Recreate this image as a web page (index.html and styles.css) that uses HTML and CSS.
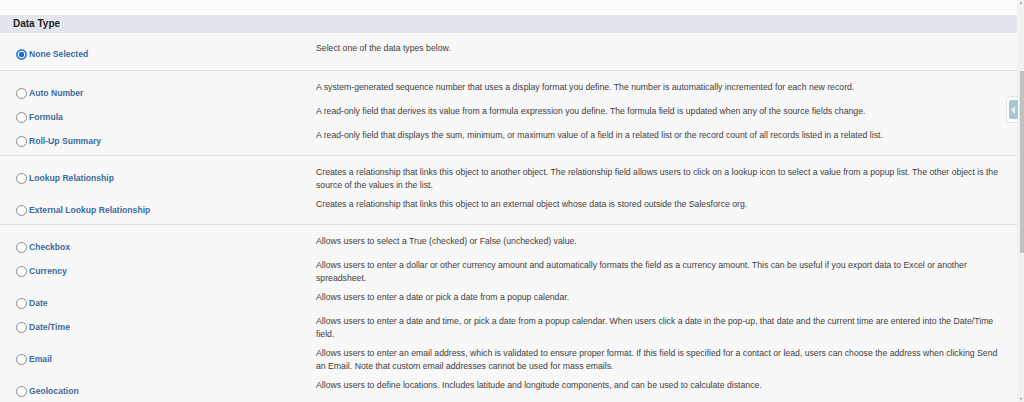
FILE: index.html
```html
<!DOCTYPE html>
<html>
<head>
<meta charset="utf-8">
<link rel="stylesheet" href="styles.css">
</head>
<body>
<div class="page">
  <div class="main">
    <div class="topgap"></div>
    <div class="hdr">Data Type</div>

    <div class="section first">
      <div class="row"><div class="opt"><span class="radio on"></span><span class="lbl">None Selected</span></div><div class="desc">Select one of the data types below.</div></div>
    </div>

    <div class="section">
      <div class="row"><div class="opt"><span class="radio"></span><span class="lbl">Auto Number</span></div><div class="desc">A system-generated sequence number that uses a display format you define. The number is automatically incremented for each new record.</div></div>
      <div class="row"><div class="opt"><span class="radio"></span><span class="lbl">Formula</span></div><div class="desc">A read-only field that derives its value from a formula expression you define. The formula field is updated when any of the source fields change.</div></div>
      <div class="row"><div class="opt"><span class="radio"></span><span class="lbl">Roll-Up Summary</span></div><div class="desc">A read-only field that displays the sum, minimum, or maximum value of a field in a related list or the record count of all records listed in a related list.</div></div>
    </div>

    <div class="section">
      <div class="row"><div class="opt"><span class="radio"></span><span class="lbl">Lookup Relationship</span></div><div class="desc">Creates a relationship that links this object to another object. The relationship field allows users to click on a lookup icon to select a value from a popup list. The other object is the<br>source of the values in the list.</div></div>
      <div class="row"><div class="opt"><span class="radio"></span><span class="lbl">External Lookup Relationship</span></div><div class="desc">Creates a relationship that links this object to an external object whose data is stored outside the Salesforce org.</div></div>
    </div>

    <div class="section">
      <div class="row"><div class="opt"><span class="radio"></span><span class="lbl">Checkbox</span></div><div class="desc">Allows users to select a True (checked) or False (unchecked) value.</div></div>
      <div class="row"><div class="opt"><span class="radio"></span><span class="lbl">Currency</span></div><div class="desc">Allows users to enter a dollar or other currency amount and automatically formats the field as a currency amount. This can be useful if you export data to Excel or another<br>spreadsheet.</div></div>
      <div class="row"><div class="opt"><span class="radio"></span><span class="lbl">Date</span></div><div class="desc">Allows users to enter a date or pick a date from a popup calendar.</div></div>
      <div class="row"><div class="opt"><span class="radio"></span><span class="lbl">Date/Time</span></div><div class="desc">Allows users to enter a date and time, or pick a date from a popup calendar. When users click a date in the pop-up, that date and the current time are entered into the Date/Time<br>field.</div></div>
      <div class="row"><div class="opt"><span class="radio"></span><span class="lbl">Email</span></div><div class="desc">Allows users to enter an email address, which is validated to ensure proper format. If this field is specified for a contact or lead, users can choose the address when clicking Send<br>an Email. Note that custom email addresses cannot be used for mass emails.</div></div>
      <div class="row"><div class="opt"><span class="radio"></span><span class="lbl">Geolocation</span></div><div class="desc">Allows users to define locations. Includes latitude and longitude components, and can be used to calculate distance.</div></div>
    </div>
  </div>

  <div class="scroll">
    <div class="arrow up"></div>
    <div class="track"><div class="thumb"></div></div>
    <div class="arrow down"></div>
  </div>

  <div class="sidetab"><div class="tabinner"><span class="tri"></span></div></div>
</div>
</body>
</html>
```

FILE: styles.css
```css
html, body {
  margin: 0;
  padding: 0;
  background: #f8f8f8;
  font-family: "Liberation Sans", Arial, sans-serif;
}

.page {
  position: relative;
  display: flex;
  width: 1024px;
  height: 402px;
  overflow: hidden;
}

.main {
  width: 1017px;
  flex: none;
  background: #f8f8f8;
}

.topgap {
  height: 15px;
  background: #fbfbfb;
}

.hdr {
  height: 18px;
  line-height: 18px;
  background: #e3e6ef;
  padding-left: 13px;
  font-size: 10px;
  font-weight: bold;
  color: #222;
}

.section {
  padding: 7px 0 5px;
  border-top: 1px solid #dddddd;
}

.section.first {
  padding: 6px 0 7px;
  border-top: none;
}

.row {
  display: grid;
  grid-template-columns: 316px 1fr;
  padding: 3px 0;
}

.opt {
  display: flex;
  align-items: center;
  height: 12px;
  padding: 6px 0 0 16px;
}

.radio {
  width: 9px;
  height: 9px;
  border: 1px solid #8a8a8a;
  border-radius: 50%;
  background: #fff;
  flex: none;
  margin-right: 2px;
}

.radio.on {
  border-color: #2b7de9;
  background: radial-gradient(circle, #1a6fe0 0 2.6px, #ffffff 3px 3.4px, #3d8af0 3.8px);
}

.lbl {
  font-size: 8.6px;
  font-weight: bold;
  color: #3a6b9f;
  white-space: nowrap;
}

.desc {
  font-size: 8.7px;
  line-height: 13px;
  color: #404040;
  white-space: nowrap;
}

.scroll {
  width: 7px;
  flex: none;
  display: flex;
  flex-direction: column;
  background: #f1f1f1;
}

.arrow {
  height: 6px;
  position: relative;
}

.arrow::after {
  content: "";
  position: absolute;
  left: 3px;
  top: 2px;
  border-left: 1.5px solid transparent;
  border-right: 1.5px solid transparent;
}

.arrow.up::after {
  border-bottom: 2px solid #777;
}

.arrow.down::after {
  border-top: 2px solid #777;
}

.track {
  flex: 1;
  padding-top: 65px;
}

.thumb {
  margin-left: 3px;
  width: 4px;
  height: 182px;
  background: #c1c1c1;
}

.sidetab {
  position: absolute;
  left: 1006px;
  top: 96px;
  width: 14px;
  height: 27px;
  box-sizing: border-box;
  background: #ffffff;
  border: 1px solid #e2e2e2;
  border-radius: 4px;
  padding: 3px 0 3px 2px;
}

.tabinner {
  width: 9px;
  height: 100%;
  background: #a9c6d4;
  border-radius: 2px 0 0 2px;
  position: relative;
}

.tri {
  position: absolute;
  left: 2px;
  top: 6px;
  border-top: 4px solid transparent;
  border-bottom: 4px solid transparent;
  border-right: 4px solid #e8f0f4;
}
```
